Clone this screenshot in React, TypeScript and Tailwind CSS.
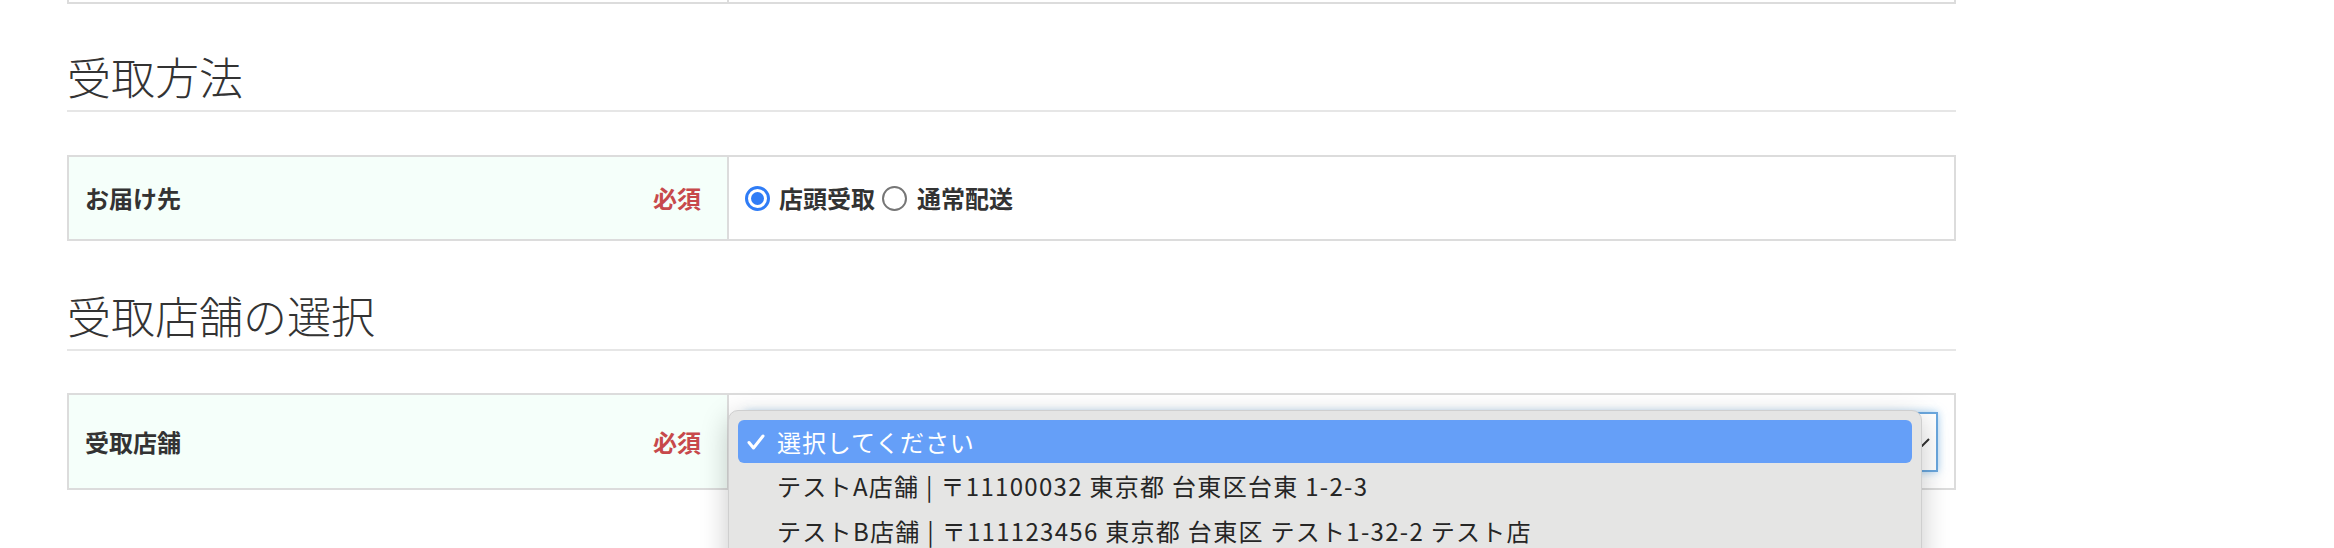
import React from 'react';

const font = "font-['Noto_Sans_CJK_JP','Noto_Sans',sans-serif]";

function Heading({ children, className = '' }: { children: React.ReactNode; className?: string }) {
  return (
    <h2
      className={`border-b-2 border-[#e6e6e6] pb-[2px] text-[44px] font-light leading-[64px] text-[#333] ${className}`}
    >
      {children}
    </h2>
  );
}

function Row({ label, height, children }: { label: string; height: string; children: React.ReactNode }) {
  return (
    <div className={`flex border-2 border-[#dcdcdc] ${height}`}>
      <div className="flex w-[660px] items-center justify-between border-r-2 border-[#dcdcdc] bg-[#f5fffa] pl-[16px] pr-[26px]">
        <span className="text-[24px] font-bold leading-none text-[#333]">{label}</span>
        <span className="text-[24px] font-bold leading-none text-[#c7494b]">必須</span>
      </div>
      <div className="flex flex-1 items-center bg-white px-[16px]">{children}</div>
    </div>
  );
}

function Radio({ checked }: { checked?: boolean }) {
  if (checked) {
    return (
      <span className="flex h-[25px] w-[25px] shrink-0 items-center justify-center rounded-full border-[3px] border-[#2f7cf6] bg-white">
        <span className="block h-[13px] w-[13px] rounded-full bg-[#2f7cf6]" />
      </span>
    );
  }
  return <span className="block h-[25px] w-[25px] shrink-0 rounded-full border-2 border-[#767676] bg-white" />;
}

const stores = [
  'テストA店舗 | 〒11100032 東京都 台東区台東 1-2-3',
  'テストB店舗 | 〒111123456 東京都 台東区 テスト1-32-2 テスト店',
  'テストC店舗 | 〒1110001 東京都 台東区 3-4-5',
];

export default function App() {
  return (
    <div className={`relative h-[548px] w-[2334px] overflow-hidden bg-white ${font}`}>
      <div className="ml-[67px] w-[1889px]">
        {/* 前のテーブルの下端 */}
        <div className="flex h-[4px] border-x-2 border-b-2 border-[#dcdcdc]">
          <div className="w-[660px] border-r-2 border-[#dcdcdc]" />
        </div>

        <Heading className="mt-[40px]">受取方法</Heading>

        <div className="mt-[43px]">
          <Row label="お届け先" height="h-[86px]">
            <Radio checked />
            <span className="ml-[9px] text-[24px] font-bold leading-none text-[#333]">店頭受取</span>
            <span className="ml-[7px]">
              <Radio />
            </span>
            <span className="ml-[10px] text-[24px] font-bold leading-none text-[#333]">通常配送</span>
          </Row>
        </div>

        <Heading className="mt-[42px]">受取店舗の選択</Heading>

        <div className="mt-[42px]">
          <Row label="受取店舗" height="h-[97px]">
            <div className="relative h-[60px] w-full border-2 border-[#6aa7de] bg-white shadow-[0_0_8px_rgba(102,175,233,0.6)]">
              <svg
                className="absolute right-[6px] top-[23px]"
                width="16"
                height="10"
                viewBox="0 0 16 10"
                fill="none"
                stroke="#333"
                strokeWidth="2"
              >
                <path d="M1 2 L8 9 L15 2" />
              </svg>
            </div>
          </Row>
        </div>

        <Heading className="mt-[45px]">ラッピングの選択</Heading>
      </div>

      {/* ネイティブのセレクトメニュー */}
      <div className="absolute left-[728px] top-[410px] h-[220px] w-[1194px] rounded-[10px] border border-[#cfcfcf] bg-[#e5e5e4] p-[9px] shadow-[0_8px_28px_rgba(0,0,0,0.22)]">
        <div className="flex h-[43px] items-center rounded-[6px] bg-[#659ff8] pl-[9px] text-[24px] leading-none tracking-[0.9px] text-white">
          <span className="w-[30px]">
            <svg width="18" height="16" viewBox="0 0 18 16" fill="none" stroke="white" strokeWidth="3" strokeLinecap="round" strokeLinejoin="round">
              <path d="M2 8.5 L6.5 14 L16 2" />
            </svg>
          </span>
          選択してください
        </div>
        {stores.map((s) => (
          <div key={s} className="flex h-[45px] items-center pl-[39px] text-[24px] leading-none tracking-[1.3px] text-[#262626]">
            {s}
          </div>
        ))}
      </div>
    </div>
  );
}
